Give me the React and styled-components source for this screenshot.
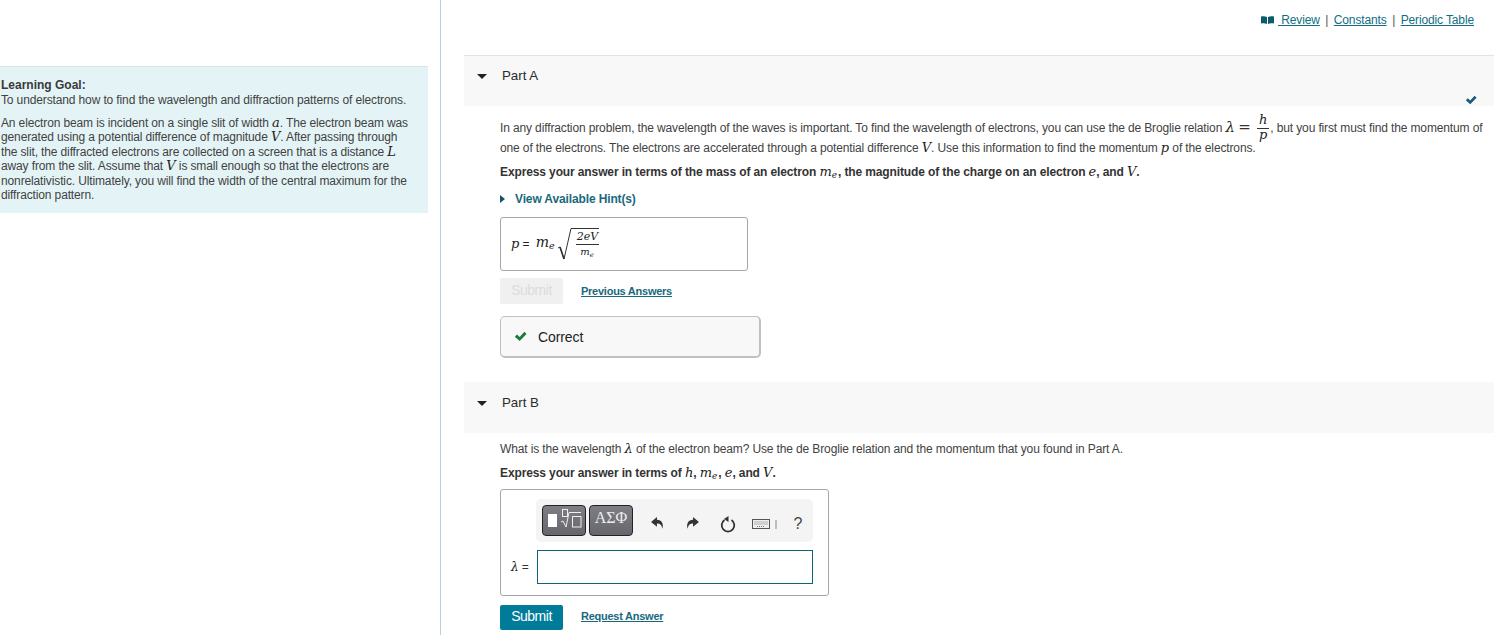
import styled, { createGlobalStyle } from "styled-components";

const GlobalStyle = createGlobalStyle`
  html, body {
    margin: 0;
    padding: 0;
    background: #fff;
    overflow: hidden;
  }
  body {
    font-family: "Liberation Sans", Arial, sans-serif;
    font-size: 12px;
    letter-spacing: -0.13px;
    color: #424242;
  }
`;

const Page = styled.div`
  display: flex;
  width: 1494px;
  height: 635px;
  overflow: hidden;
`;

const Sidebar = styled.aside`
  width: 428px;
  padding-top: 66px;
  margin-right: 12px;
  flex: none;
`;

const GoalBox = styled.div`
  height: 147px;
  box-sizing: border-box;
  padding: 11px 16px 0 1px;
  background: #e4f4f6;
  border-top: 1px solid #d8e4e6;
  line-height: 14.5px;
`;

const GoalTitle = styled.div`
  font-weight: bold;
  letter-spacing: 0;
  color: #3a3a3a;
`;

const GoalText = styled.p`
  margin: ${(p) => (p.$first ? "0" : "8.5px 0 0")};
`;

const Main = styled.main`
  flex: 1;
  min-width: 0;
  border-left: 1px solid #b9d0dc;
  padding-left: 23px;
`;

const TopLinks = styled.nav`
  height: 55px;
  box-sizing: border-box;
  display: flex;
  justify-content: flex-end;
  align-items: center;
  gap: 5.5px;
  padding: 0 20px 16px 0;
  color: #555;
`;

const TopLink = styled.a`
  color: #0f6f84;
  text-decoration: underline;
`;

const PartHeader = styled.div`
  position: relative;
  height: 51px;
  box-sizing: border-box;
  padding: ${(p) => (p.$border ? 12 : 13)}px 0 0 13px;
  display: flex;
  align-items: flex-start;
  background: #f8f8f8;
  border-top: ${(p) => (p.$border ? "1px solid #e2e2e2" : "none")};
`;

const Caret = styled.span`
  width: 0;
  height: 0;
  margin: 6px 15px 0 0;
  border-left: 5px solid transparent;
  border-right: 5px solid transparent;
  border-top: 5px solid #222;
`;

const PartTitle = styled.h2`
  margin: 0;
  font-size: 13.3px;
  line-height: 16px;
  font-weight: normal;
  letter-spacing: 0;
  color: #2b2b2b;
`;

const DoneMark = styled.span`
  position: absolute;
  right: 17px;
  bottom: 1px;
  line-height: 0;
`;

const PartBody = styled.section`
  padding-left: 36px;
`;

const Text = styled.p`
  margin: ${(p) => p.$top}px 0 0;
  line-height: 20px;
`;

const Strong = styled.p`
  margin: ${(p) => p.$top}px 0 0;
  line-height: 20px;
  letter-spacing: -0.12px;
  color: #333;
  font-weight: bold;
`;

const Mv = styled.i`
  font-family: "DejaVu Serif", "Liberation Serif", serif;
  font-size: ${(p) => p.$size || 13}px;
  font-weight: normal;
  letter-spacing: 0;
  line-height: 0;
  color: #222;
`;

const Sign = styled.span`
  font-family: "DejaVu Serif", "Liberation Serif", serif;
  font-size: ${(p) => p.$size || 14}px;
  letter-spacing: 0;
  line-height: 0;
  color: #333;
`;

const Sub = styled.sub`
  font-size: 0.68em;
  line-height: 0;
  vertical-align: -2px;
  padding-right: 1px;
`;

const Frac = styled.span`
  display: inline-flex;
  flex-direction: column;
  align-items: center;
  vertical-align: middle;
  margin: -9px 1px -7px 3px;
`;

const FracTop = styled.span`
  border-bottom: 1px solid #333;
  padding: 0 ${(p) => p.$pad ?? 2}px 1px;
  line-height: 13px;
`;

const FracBottom = styled.span`
  padding: 0 2px;
  line-height: 13px;
`;

const HintRow = styled.a`
  display: flex;
  align-items: center;
  gap: 10px;
  margin-top: 7px;
  height: 20px;
  color: #19697d;
  font-weight: bold;
  text-decoration: none;
`;

const HintCaret = styled.span`
  width: 0;
  height: 0;
  border-top: 4.5px solid transparent;
  border-bottom: 4.5px solid transparent;
  border-left: 5px solid #15556b;
`;

const AnswerBox = styled.div`
  width: 248px;
  height: 54px;
  box-sizing: border-box;
  margin-top: 8px;
  padding-left: 10px;
  display: flex;
  align-items: center;
  border: 1px solid #a6a6a6;
  border-radius: 3px;
  color: #222;
`;

const Radical = styled.span`
  display: inline-flex;
  align-items: flex-start;
  margin-left: 1px;
`;

const Radicand = styled.span`
  display: inline-flex;
  flex-direction: column;
  align-items: center;
  border-top: 1px solid #333;
  padding: 1px 0 0 5px;
  margin-left: -1px;
`;

const Actions = styled.div`
  display: flex;
  align-items: center;
  gap: 18px;
  margin-top: ${(p) => p.$top}px;
`;

const SubmitButton = styled.button`
  width: 63px;
  height: ${(p) => (p.disabled ? 26 : 25)}px;
  padding: 0 0 ${(p) => (p.disabled ? 3 : 4)}px;
  border: 0;
  border-radius: 2px;
  font: 14px "Liberation Sans", Arial, sans-serif;
  letter-spacing: -0.5px;
  color: ${(p) => (p.disabled ? "#dcdcdc" : "#fff")};
  background: ${(p) => (p.disabled ? "#f0f0f0" : "#007c9a")};
`;

const ActionLink = styled.a`
  margin-bottom: ${(p) => p.$lift || 0}px;
  color: #19697d;
  font-size: 11px;
  font-weight: bold;
  letter-spacing: -0.25px;
  text-decoration: underline;
`;

const Feedback = styled.div`
  width: 261px;
  height: 42px;
  box-sizing: border-box;
  margin-top: 12px;
  padding-left: 13px;
  display: flex;
  align-items: center;
  gap: 11px;
  background: #f8f8f8;
  border: 1px solid #c0c0c0;
  border-bottom-width: 2px;
  border-right-width: 2px;
  border-radius: 5px;
  font-size: 14px;
  letter-spacing: -0.1px;
  color: #222;
`;

const PartBlock = styled.div`
  margin-top: ${(p) => p.$top || 0}px;
`;

const EditorBox = styled.div`
  width: 329px;
  height: 107px;
  box-sizing: border-box;
  margin-top: 6px;
  padding: 9px 15px 0 10px;
  border: 1px solid #a6a6a6;
  border-radius: 3px;
`;

const Toolbar = styled.div`
  width: 277px;
  height: 43px;
  box-sizing: border-box;
  margin-left: 25px;
  padding: 6px 0 0 6px;
  display: flex;
  background: #f4f4f4;
  border-radius: 5px;
`;

const ModeButton = styled.div`
  width: 44px;
  height: 31px;
  margin-right: 3px;
  flex: none;
  box-sizing: border-box;
  display: flex;
  align-items: center;
  justify-content: center;
  padding-bottom: ${(p) => p.$lift || 0}px;
  border: 1px solid #222;
  border-radius: 4px;
  background: linear-gradient(#7e7e85, #66666c);
  color: #eee;
  font: 16px "Liberation Serif", serif;
  letter-spacing: 0;
`;

const ToolIcon = styled.span`
  width: ${(p) => p.$w}px;
  height: 34px;
  box-sizing: border-box;
  padding-top: 3px;
  flex: none;
  display: flex;
  align-items: center;
  justify-content: center;
  color: #444;
  font-size: 16px;
`;

const InputRow = styled.div`
  display: flex;
  align-items: center;
  margin-top: 8px;
  color: #333;
`;

const InputLabel = styled.label`
  width: 26px;
  flex: none;
  white-space: nowrap;
`;

const MathInput = styled.div`
  width: 276px;
  height: 34px;
  box-sizing: border-box;
  background: #fff;
  border: 1px solid #0f6578;
`;

const BookIcon = () => (
  <svg width="13" height="8" viewBox="0 0 13 8" style={{ marginRight: 4 }}>
    <path d="M0 .5C2 0 4 0 6 1v7C4 7 2 7 0 7.500zM13 .5C11 0 9 0 7 1v7c2-1 4-1 6-.5z" fill="#0b5d6e" />
  </svg>
);

const Check = ({ color, size = 13 }) => (
  <svg width={size} height={size * 0.8} viewBox="0 0 15 12">
    <path d="M1 6.500l2.500-2.500 3 3L12 1l2.500 2.500L6.500 11.500z" fill={color} />
  </svg>
);

const RadicalSign = () => (
  <svg width="15" height="33" viewBox="0 0 15 33">
    <path d="M1 20l2-1 4 12 7-30.500h1" fill="none" stroke="#333" strokeWidth="1" />
    <path d="M3 19l4 12" fill="none" stroke="#333" strokeWidth="1.600" />
  </svg>
);

export default function App() {
  return (
    <Page>
      <GlobalStyle />
      <Sidebar>
        <GoalBox>
          <GoalTitle>Learning Goal:</GoalTitle>
          <GoalText $first>To understand how to find the wavelength and diffraction patterns of electrons.</GoalText>
          <GoalText>
            An electron beam is incident on a single slit of width <Mv>a</Mv>. The electron beam was generated using a
            potential difference of magnitude <Mv>V</Mv>. After passing through the slit, the diffracted electrons are
            collected on a screen that is a distance <Mv>L</Mv> away from the slit. Assume that <Mv>V</Mv> is small
            enough so that the electrons are nonrelativistic. Ultimately, you will find the width of the central maximum
            for the diffraction pattern.
          </GoalText>
        </GoalBox>
      </Sidebar>
      <Main>
        <TopLinks>
          <TopLink href="#"><BookIcon />&nbsp;Review</TopLink>|
          <TopLink href="#">Constants</TopLink>|
          <TopLink href="#">Periodic Table</TopLink>
        </TopLinks>

        <PartHeader $border>
          <Caret />
          <PartTitle>Part A</PartTitle>
          <DoneMark><Check color="#1c5a78" size={12} /></DoneMark>
        </PartHeader>
        <PartBody>
          <Text $top={12}>
            In any diffraction problem, the wavelength of the waves is important. To find the wavelength of electrons,
            you can use the de Broglie relation <Mv $size={15}>λ</Mv> <Sign $size={15}>=</Sign>{" "}
            <Frac>
              <FracTop><Mv>h</Mv></FracTop>
              <FracBottom><Mv>p</Mv></FracBottom>
            </Frac>
            , but you first must find the momentum of one of the electrons. The electrons are accelerated through a
            potential difference <Mv>V</Mv>. Use this information to find the momentum <Mv>p</Mv> of the electrons.
          </Text>
          <Strong $top={4}>
            Express your answer in terms of the mass of an electron <Mv>m<Sub>e</Sub></Mv>, the magnitude of the charge on
            an electron <Mv>e</Mv>, and <Mv>V</Mv>.
          </Strong>
          <HintRow href="#"><HintCaret />View Available Hint(s)</HintRow>
          <AnswerBox>
            <Mv>p</Mv>&nbsp;=&nbsp;&nbsp;<Mv $size={14}>m<Sub>e</Sub></Mv>
            <Radical>
              <RadicalSign />
              <Radicand>
                <FracTop $pad={1}><Mv $size={11}>2eV</Mv></FracTop>
                <FracBottom><Mv $size={10}>m<Sub>e</Sub></Mv></FracBottom>
              </Radicand>
            </Radical>
          </AnswerBox>
          <Actions $top={7}>
            <SubmitButton disabled>Submit</SubmitButton>
            <ActionLink href="#">Previous Answers</ActionLink>
          </Actions>
          <Feedback><Check color="#1e7a3c" size={13} />Correct</Feedback>
        </PartBody>

        <PartBlock $top={24}>
          <PartHeader>
            <Caret />
            <PartTitle>Part B</PartTitle>
          </PartHeader>
        </PartBlock>
        <PartBody>
          <Text $top={6}>
            What is the wavelength <Mv>λ</Mv> of the electron beam? Use the de Broglie relation and the momentum that you
            found in Part A.
          </Text>
          <Strong $top={4}>
            Express your answer in terms of <Mv>h</Mv>, <Mv>m<Sub>e</Sub></Mv>, <Mv>e</Mv>, and <Mv>V</Mv>.
          </Strong>
          <EditorBox>
            <Toolbar>
              <ModeButton>
                <svg width="42" height="29" viewBox="0 0 42 29">
                  <rect x="5" y="8" width="9" height="13" fill="#fff" />
                  <rect x="19.500" y="3.500" width="5" height="7" fill="none" stroke="#eee" />
                  <path d="M18 16l2-1 3 6 3-14.500h12" fill="none" stroke="#eee" />
                  <rect x="29.500" y="10.500" width="8.500" height="10.500" fill="none" stroke="#eee" />
                </svg>
              </ModeButton>
              <ModeButton $lift={5}>ΑΣΦ</ModeButton>
              <ToolIcon $w={42}>
                <svg width="15" height="15" viewBox="0 0 14 14">
                  <path d="M6.500 1L1 5.500 6.500 10V7c2.500 0 4.500 1 5 5 1.500-4.500-.5-8.500-5-8.500z" fill="#333" />
                </svg>
              </ToolIcon>
              <ToolIcon $w={28}>
                <svg width="15" height="15" viewBox="0 0 14 14">
                  <path d="M7.500 1L13 5.500 7.500 10V7c-2.500 0-4.500 1-5 5-1.500-4.500.5-8.500 5-8.500z" fill="#333" />
                </svg>
              </ToolIcon>
              <ToolIcon $w={44}>
                <svg width="16" height="18" viewBox="0 0 16 18">
                  <path d="M4.500 5a6.300 6.300 0 1 0 7 0" fill="none" stroke="#333" strokeWidth="1.800" />
                  <path d="M8.500 1v6l-4.500-3z" fill="#333" />
                </svg>
              </ToolIcon>
              <ToolIcon $w={30}>
                <svg width="26" height="12" viewBox="0 0 26 12">
                  <rect x=".5" y="1.500" width="17" height="9" fill="#eee" stroke="#555" />
                  <path d="M2.500 4h13M2.500 6h13M5 8.500h8" stroke="#777" strokeDasharray="1 1" />
                  <path d="M24 2v9" stroke="#888" />
                </svg>
              </ToolIcon>
              <ToolIcon $w={36}>?</ToolIcon>
            </Toolbar>
            <InputRow>
              <InputLabel><Mv $size={12}>λ</Mv> =</InputLabel>
              <MathInput />
            </InputRow>
          </EditorBox>
          <Actions $top={9}>
            <SubmitButton>Submit</SubmitButton>
            <ActionLink href="#" $lift={3}>Request Answer</ActionLink>
          </Actions>
        </PartBody>
      </Main>
    </Page>
  );
}
